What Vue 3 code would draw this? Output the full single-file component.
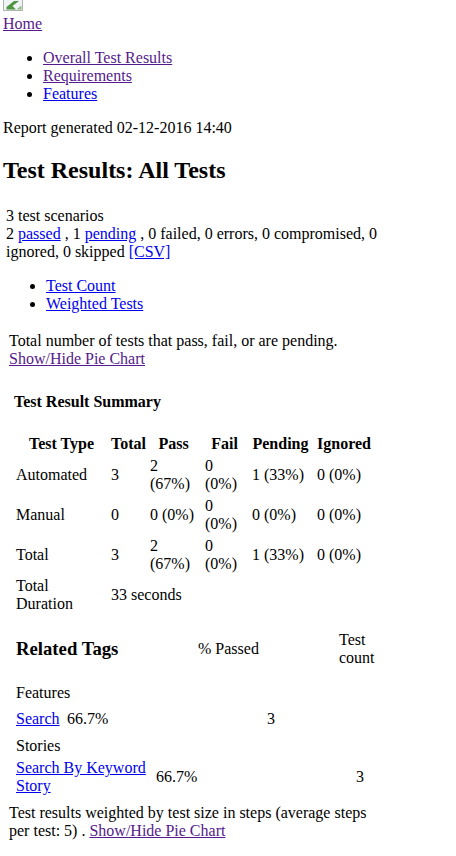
<script setup>
const rows = [
  ['Automated', '3', '2 (67%)', '0 (0%)', '1 (33%)', '0 (0%)'],
  ['Manual', '0', '0 (0%)', '0 (0%)', '0 (0%)', '0 (0%)'],
  ['Total', '3', '2 (67%)', '0 (0%)', '1 (33%)', '0 (0%)'],
]
const heads = ['Test Type', 'Total', 'Pass', 'Fail', 'Pending', 'Ignored']
</script>

<template>
  <div class="page">
    <svg class="broken" width="20" height="11" viewBox="0 0 20 11">
      <rect x="0.5" y="-2" width="19" height="12.5" fill="#eef3f6" stroke="#b0b4b0" />
      <path d="M3.5 9.5V7L11 1h5L9.5 6l3.5 3.5z" fill="#4f9440" />
      <path d="M13.5 9.5l5-4v4z" fill="#8dbb7c" />
    </svg>
    <a class="seen" href="#">Home</a>
    <ul class="nav">
      <li><a class="seen" href="#">Overall Test Results</a></li>
      <li><a class="seen" href="#">Requirements</a></li>
      <li><a href="#">Features</a></li>
    </ul>
    <p class="stamp">Report generated 02-12-2016 14:40</p>
    <h1>Test Results: All Tests</h1>
    <div class="counts">
      3 test scenarios<br />
      2 <a href="#">passed</a> , 1 <a href="#">pending</a> , 0 failed, 0 errors, 0 compromised, 0 ignored, 0 skipped <a href="#">[CSV]</a>
    </div>
    <ul class="tabs">
      <li><a href="#">Test Count</a></li>
      <li><a href="#">Weighted Tests</a></li>
    </ul>
    <p class="note">
      Total number of tests that pass, fail, or are pending.<br />
      <a class="seen" href="#">Show/Hide Pie Chart</a>
    </p>
    <h4 class="summary-title">Test Result Summary</h4>
    <table class="summary">
      <colgroup>
        <col class="c1" /><col class="c2" /><col class="c3" /><col class="c4" /><col class="c5" /><col class="c6" />
      </colgroup>
      <thead>
        <tr><th v-for="h in heads" :key="h">{{ h }}</th></tr>
      </thead>
      <tbody>
        <tr v-for="r in rows" :key="r[0]">
          <td v-for="(c, i) in r" :key="i">{{ c }}</td>
        </tr>
        <tr>
          <td>Total Duration</td>
          <td colspan="5">33 seconds</td>
        </tr>
      </tbody>
    </table>
    <table class="tags-head">
      <colgroup>
        <col class="h1" /><col class="h2" /><col class="h3" />
      </colgroup>
      <tbody>
        <tr>
          <td><h3>Related Tags</h3></td>
          <td>% Passed</td>
          <td>Test count</td>
        </tr>
      </tbody>
    </table>
    <div class="group">Features</div>
    <table class="tag t1">
      <colgroup>
        <col class="n1" /><col class="p1" /><col class="x1" />
      </colgroup>
      <tbody>
        <tr>
          <td><a href="#">Search</a></td>
          <td>66.7%</td>
          <td>3</td>
        </tr>
      </tbody>
    </table>
    <div class="group stories">Stories</div>
    <table class="tag t2">
      <colgroup>
        <col class="n2" /><col class="p2" /><col class="x2" />
      </colgroup>
      <tbody>
        <tr>
          <td><a href="#">Search By Keyword Story</a></td>
          <td>66.7%</td>
          <td>3</td>
        </tr>
      </tbody>
    </table>
    <p class="weighted">
      Test results weighted by test size in steps (average steps per test: 5) .
      <a class="seen" href="#">Show/Hide Pie Chart</a>
    </p>
  </div>
</template>

<style>
html, body { background: #fff; margin: 0; }
</style>

<style scoped>
.page {
  width: 456px;
  height: 856px;
  overflow: hidden;
  box-sizing: border-box;
  padding: 0 3px;
  font: 16px/18px "Liberation Serif", "Times New Roman", serif;
  color: #000;
}
a { color: #0000ee; text-decoration: underline; }
a.seen { color: #551a8b; }
.broken { display: block; margin-bottom: 4px; }
ul { margin: 16px 0; padding-left: 40px; }
p { margin: 0; }
.stamp { margin-top: 16px; }
h1 { font-size: 24px; line-height: 27px; margin: 20px 0 0; font-weight: bold; }
.counts { width: 374px; margin: 23px 0 0 3px; }
.tabs { margin: 16px 0 0 3px; }
.note { margin: 19px 0 0 6px; width: 370px; }
.summary-title { font-size: 16px; line-height: 18px; font-weight: bold; margin: 25px 0 0 11px; }
table { border-collapse: separate; border-spacing: 2px; table-layout: fixed; font-size: 16px; }
td, th { padding: 1px; }
th:nth-child(n + 3) { padding-right: 5px; }
.summary { margin: 21px 0 0 10px; width: 364px; }
.c1 { width: 93px; }
.c2 { width: 37px; }
.c3 { width: 53px; }
.c4 { width: 45px; }
.c5 { width: 63px; }
.c6 { width: 59px; }
.tags-head { margin: 12px 0 0 10px; width: 374px; }
.h1 { width: 180px; }
.h2 { width: 139px; }
.h3 { width: 47px; }
h3 { font-size: 18.72px; line-height: 22px; margin: 0; font-weight: bold; }
.group { margin: 14px 0 0 13px; }
.stories { margin-top: 6px; }
.tag { margin: 5px 0 0 10px; }
.t1 { width: 288px; }
.n1 { width: 49px; }
.p1 { width: 198px; }
.x1 { width: 33px; }
.t2 { margin-top: 1px; width: 376px; }
.n2 { width: 138px; }
.p2 { width: 198px; }
.x2 { width: 32px; }
.weighted { margin: 6px 0 0 6px; width: 370px; }
</style>
